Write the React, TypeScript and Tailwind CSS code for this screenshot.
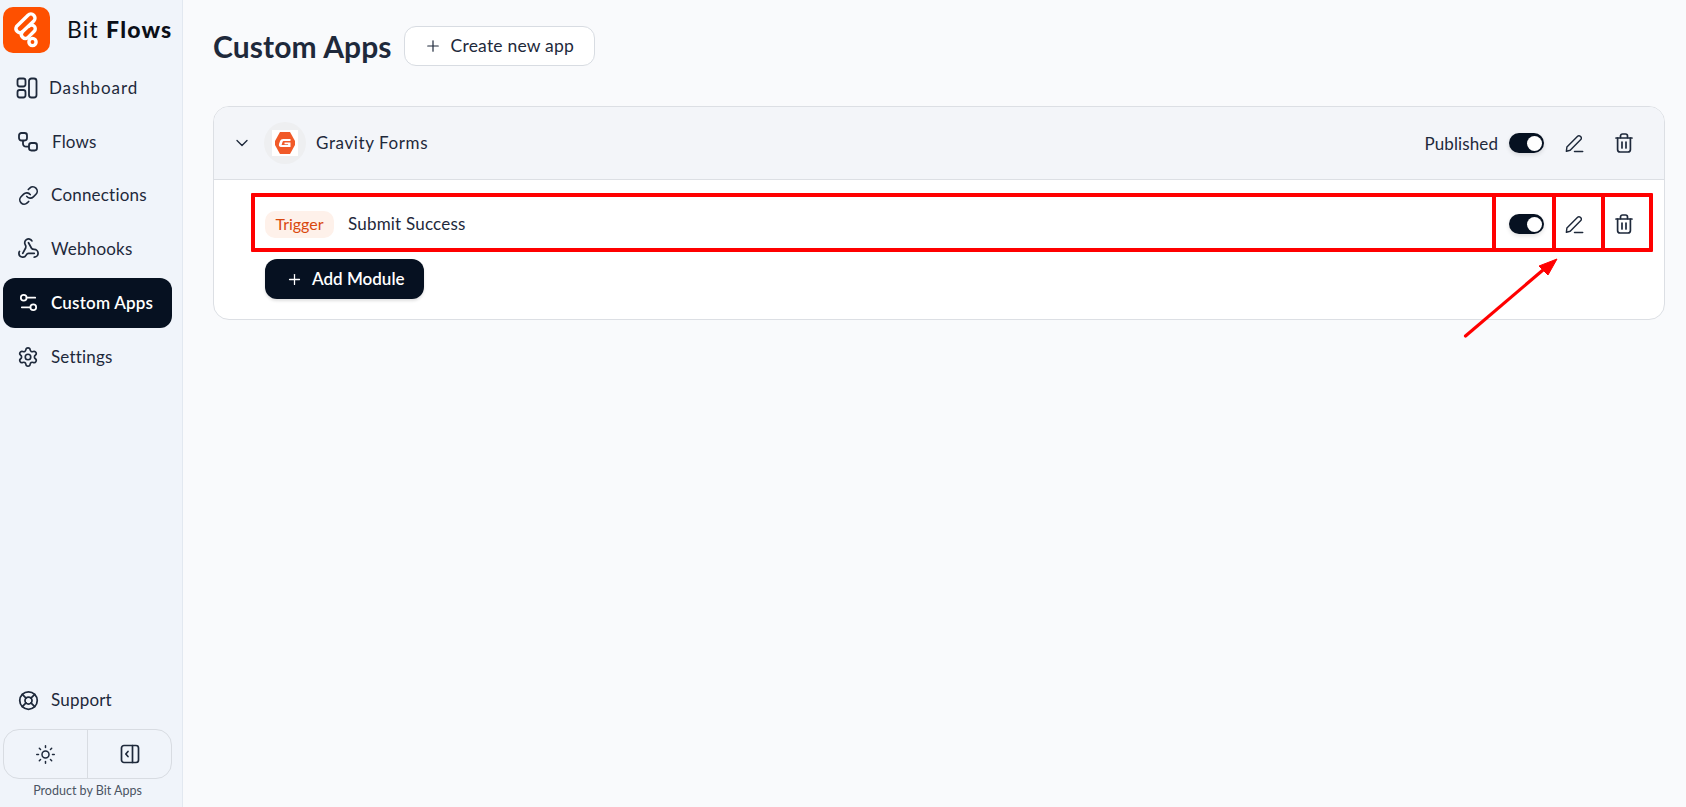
import React from "react";
import { ChevronDown, Plus, Settings, LifeBuoy, Sun, Webhook, Link, Settings2 } from "lucide-react";

const ic = "shrink-0";

function DashIcon() {
  return (
    <svg width="22" height="22" viewBox="0 0 22 22" fill="none" stroke="currentColor" strokeWidth="1.8" className={ic}>
      <rect x="1.5" y="1.5" width="8" height="8" rx="2.2" />
      <rect x="1.5" y="13" width="8" height="7.5" rx="2.2" />
      <rect x="13" y="1.5" width="7.5" height="19" rx="2.5" />
    </svg>
  );
}

function FlowIcon() {
  return (
    <svg width="20" height="20" viewBox="0 0 20 20" fill="none" stroke="currentColor" strokeWidth="1.8" className={ic}>
      <rect x="1" y="1" width="8" height="7.5" rx="2.4" />
      <rect x="11" y="11" width="8" height="7.5" rx="2.4" />
      <path d="M5 8.5v3.2a3 3 0 0 0 3 3h3" />
    </svg>
  );
}

function PanelIcon() {
  return (
    <svg width="20" height="20" viewBox="0 0 20 20" fill="none" stroke="currentColor" strokeWidth="1.7" strokeLinecap="round" strokeLinejoin="round">
      <rect x="1.5" y="1.5" width="17" height="17" rx="2.5" />
      <path d="M12.5 1.5v17" />
      <path d="M8 7.5 5.8 10 8 12.5" />
    </svg>
  );
}

function PenIcon() {
  return (
    <svg width="19" height="19" viewBox="0 0 19 19" fill="none" stroke="#1e293b" strokeWidth="1.45" strokeLinecap="round" strokeLinejoin="round">
      <path d="M1.4 17.2 1.9 13 12.6 2.3a1.9 1.9 0 0 1 2.7 0l.5.5a1.9 1.9 0 0 1 0 2.7L5.2 16.2Z" />
      <path d="M9.5 17.6h8.2" strokeWidth="1.5" />
    </svg>
  );
}

function TrashIcon() {
  return (
    <svg width="18" height="20" viewBox="0 0 18 20" fill="none" stroke="#1e293b" strokeWidth="1.7" strokeLinecap="round" strokeLinejoin="round">
      <path d="M1 5h16" />
      <path d="M5.5 4.6V3a2 2 0 0 1 2-2h3a2 2 0 0 1 2 2v1.6" />
      <path d="M2.6 5v11.5a2.5 2.5 0 0 0 2.5 2.5h7.8a2.5 2.5 0 0 0 2.5-2.5V5" />
      <path d="M7 9v6M11 9v6" />
    </svg>
  );
}

function Toggle() {
  return (
    <div className="flex h-[20px] w-[35px] items-center justify-end rounded-full bg-[#061121] pr-[2px] shadow-[0_2px_4px_rgba(0,0,0,0.12)]">
      <div className="h-[15px] w-[15px] rounded-full bg-white" />
    </div>
  );
}

function NavItem({ icon, label, active, left, track }: { icon: React.ReactNode; label: string; active?: boolean; left: string; track?: string }) {
  return (
    <div
      className={
        "flex h-[50px] items-center rounded-[12px] " +
        left +
        (active ? " bg-[#061121] font-semibold text-white" : " text-[#1e293b]")
      }
    >
      {icon}
      <span className={"text-[17px] " + (track ?? "tracking-[0.2px]")}>{label}</span>
    </div>
  );
}

export default function App() {
  return (
    <div className="relative flex h-[807px] w-[1686px] overflow-hidden bg-[#f9fafc] font-['Lato','Liberation_Sans',sans-serif] text-[#1e293b]">
      <aside className="flex h-full w-[183px] shrink-0 flex-col border-r border-[#e2e8f0] bg-[#f0f4fa] pl-[3px] pr-[10px]">
        <div className="flex h-[58px] items-center pt-[1px]">
          <svg width="47" height="46" viewBox="0 0 47 46" className="shrink-0">
            <rect width="47" height="46" rx="10" fill="#fe5000" />
            <g fill="none" stroke="#fff" strokeWidth="3.4" strokeLinecap="round" strokeLinejoin="round">
              <path d="M13.5 19.5 25 8.2a4.1 4.1 0 0 1 5.8 5.8L19.2 25a4.1 4.1 0 0 1-5.7-5.5Z" />
              <path d="M19.2 25a4 4 0 0 0 5.6 5.6l6.4-6.4a3.6 3.6 0 0 0-5.1-5.1" />
              <circle cx="29.5" cy="35" r="3.6" />
            </g>
          </svg>
          <span className="ml-[17px] whitespace-nowrap text-[23px] leading-none tracking-[1.2px] text-[#0b0f17]">
            Bit <span className="font-black">Flows</span>
          </span>
        </div>
        <nav className="mt-[5px] flex flex-col gap-[3.6px]">
          <NavItem left="pl-[13px] gap-[11px]" icon={<DashIcon />} label="Dashboard" track="tracking-[0.9px]" />
          <NavItem left="pl-[15px] gap-[14px]" icon={<FlowIcon />} label="Flows" />
          <NavItem left="pl-[15px] gap-[12px]" icon={<Link size={21} strokeWidth={1.9} />} label="Connections" />
          <NavItem left="pl-[14px] gap-[11px]" icon={<Webhook size={23} strokeWidth={1.8} />} label="Webhooks" />
          <div className="pt-[0.6px]">
            <NavItem active left="pl-[14px] gap-[11px]" icon={<Settings2 size={23} strokeWidth={1.8} />} label="Custom Apps" />
          </div>
          <NavItem left="pl-[14px] gap-[12px]" icon={<Settings size={22} strokeWidth={1.8} />} label="Settings" />
        </nav>
        <div className="mt-auto">
          <NavItem left="pl-[15px] gap-[12px]" icon={<LifeBuoy size={21} strokeWidth={2} />} label="Support" />
          <div className="mt-[4px] flex h-[50px] items-stretch rounded-[16px] border border-[#d8dce2]">
            <div className="flex w-[84px] items-center justify-center border-r border-[#d8dce2]">
              <Sun size={21} strokeWidth={1.7} />
            </div>
            <div className="flex flex-1 items-center justify-center">
              <PanelIcon />
            </div>
          </div>
          <div className="mb-[8px] mt-[4px] whitespace-nowrap text-center text-[12.5px] leading-[16px] text-[#4b5563]">Product by Bit Apps</div>
        </div>
      </aside>

      <main className="min-w-0 flex-1 pl-[30px] pr-[21px] pt-[26px]">
        <div className="flex h-[40px] items-center">
          <h1 className="text-[30px] font-bold leading-none tracking-[0.1px] text-[#1e293b]">Custom Apps</h1>
          <button className="ml-[12px] flex h-[40px] w-[191px] items-center rounded-[12px] border border-[#d8dce2] bg-white pl-[19px] text-[17.5px]">
            <Plus size={18} strokeWidth={1.6} />
            <span className="ml-[9px] tracking-[0.2px]">Create new app</span>
          </button>
        </div>

        <section className="mt-[40px] h-[214px] overflow-hidden rounded-[16px] border border-[#dcdfe4] bg-white">
          <header className="flex h-[73px] items-center border-b border-[#dcdfe4] bg-[#f3f5f9] pl-[18px]">
            <ChevronDown size={20} strokeWidth={1.6} />
            <div className="ml-[12px] flex h-[42px] w-[42px] items-center justify-center rounded-full bg-[#eeeff1]">
              <div className="flex h-[26px] w-[26px] items-center justify-center bg-white">
                <svg width="20" height="22" viewBox="0 0 20 22">
                  <path d="M5 0h10l5 9v4l-5 9H5l-5-9V9Z" fill="#f15a29" />
                  <path d="M15.5 7H8.2c-1.6 0-2.6.8-3.2 2.2L4 12c-.5 1.6.3 3 2 3h9.5v-4.6H9.5v1.8h3.6v.8H6.6l1-3.2c.2-.6.5-.8 1-.8h6.9Z" fill="#fff" />
                </svg>
              </div>
            </div>
            <span className="ml-[10px] text-[17px] tracking-[0.6px]">Gravity Forms</span>
            <div className="ml-auto flex items-center">
              <span className="pt-[2px] text-[17px] tracking-[0.1px]">Published</span>
              <div className="ml-[11px]"><Toggle /></div>
              <div className="ml-[21px]"><PenIcon /></div>
              <div className="ml-[31px] mr-[31px]"><TrashIcon /></div>
            </div>
          </header>
          <div className="mt-[15px] flex h-[58px] items-center pl-[51px]">
            <span className="flex h-[27px] w-[69px] items-center justify-center rounded-[10px] bg-[#fef1ea] text-[16px] text-[#d9480f]">Trigger</span>
            <span className="ml-[14px] text-[17px] tracking-[0.2px]">Submit Success</span>
            <div className="ml-auto flex items-center">
              <Toggle />
              <div className="ml-[21px]"><PenIcon /></div>
              <div className="ml-[31px] mr-[31px]"><TrashIcon /></div>
            </div>
          </div>
          <button className="ml-[51px] mt-[6px] flex h-[40px] w-[159px] items-center rounded-[12px] bg-[#061121] pl-[21px] text-[17px] font-semibold text-white shadow-[0_2px_3px_rgba(0,0,0,0.12)]">
            <Plus size={17} strokeWidth={1.8} />
            <span className="ml-[9px]">Add Module</span>
          </button>
        </section>
      </main>

      <div className="absolute left-[251px] top-[193px] h-[59px] w-[1402px] rounded-[1px] border-[4px] border-[#ff0000]" />
      <div className="absolute left-[1492px] top-[193px] h-[59px] w-[4px] bg-[#ff0000]" />
      <div className="absolute left-[1552px] top-[193px] h-[59px] w-[4px] bg-[#ff0000]" />
      <div className="absolute left-[1601px] top-[193px] h-[59px] w-[4px] bg-[#ff0000]" />
      <svg className="absolute left-[1455px] top-[250px]" width="115" height="95" viewBox="0 0 115 95">
        <path d="M10.5 86 88 20" stroke="#ff0000" strokeWidth="3.2" strokeLinecap="round" />
        <path d="M102 9 84 16 93 25Z" fill="#ff0000" stroke="#ff0000" strokeWidth="1" />
      </svg>
    </div>
  );
}
